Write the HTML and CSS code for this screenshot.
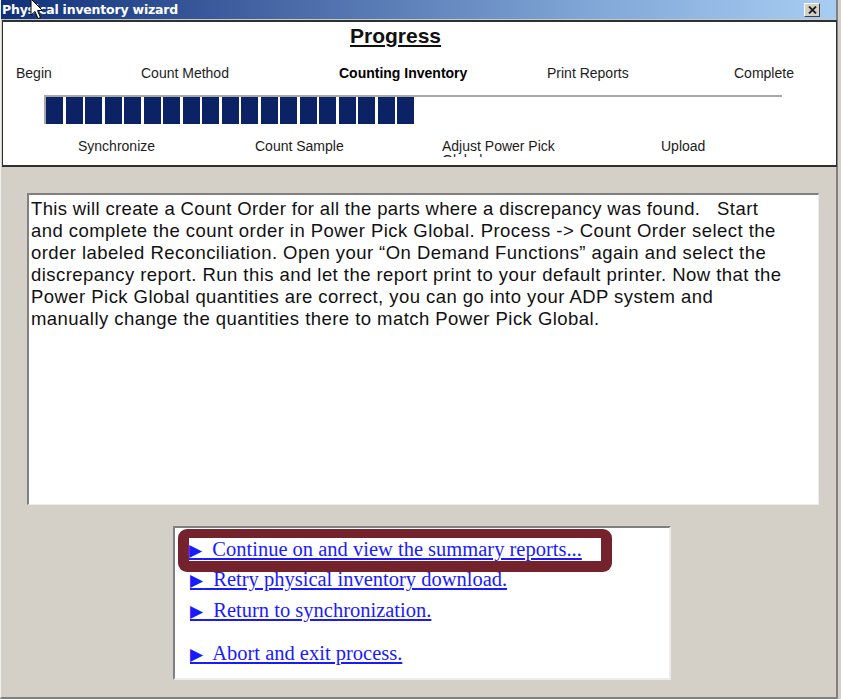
FILE: index.html
```html
<!DOCTYPE html>
<html lang="en">
<head>
    <meta charset="UTF-8">
    <meta name="viewport" content="width=device-width, initial-scale=1.0">
    <title>Physical inventory wizard</title>
    <link rel="stylesheet" href="styles.css">
</head>
<body>
    <div class="window">
        <div class="titlebar">
            <span class="title">Physical inventory wizard</span>
            <button class="close-btn" aria-label="Close">
                <svg width="9" height="8" viewBox="0 0 9 8"><path d="M1 0.5 L8 7.5 M8 0.5 L1 7.5" stroke="#202020" stroke-width="1.8"/></svg>
            </button>
        </div>

        <div class="progress-panel">
            <h2 class="progress-title">Progress</h2>
            <div class="steps steps-top">
                <span>Begin</span>
                <span>Count Method</span>
                <span class="current">Counting Inventory</span>
                <span>Print Reports</span>
                <span>Complete</span>
            </div>
            <div class="progress-bar">
                <div class="blocks" id="blocks"></div>
            </div>
            <div class="steps steps-bottom">
                <span>Synchronize</span>
                <span>Count Sample</span>
                <span class="clip">Adjust Power Pick Global</span>
                <span>Upload</span>
            </div>
        </div>

        <div class="content">
            <div class="info-box">
                <p><span class="tight">This will create a Count Order for all the parts where a discrepancy was found.</span>&nbsp; &nbsp;Start<br>
                and complete the count order in Power Pick Global. Process -&gt; Count Order select the<br>
                order labeled Reconciliation. Open your “On Demand Functions” again and select the<br>
                discrepancy report. Run this and let the report print to your default printer. Now that the<br>
                Power Pick Global quantities are correct, you can go into your ADP system and<br>
                manually change the quantities there to match Power Pick Global.</p>
            </div>

            <div class="links-box">
                <div class="highlight">
                    <a href="#" class="link"><span class="arrow">▶</span>&nbsp; Continue on and view the summary reports...</a>
                </div>
                <a href="#" class="link"><span class="arrow">▶</span>&nbsp; Retry physical inventory download.</a>
                <a href="#" class="link"><span class="arrow">▶</span>&nbsp; Return to synchronization.</a>
                <a href="#" class="link link-gap"><span class="arrow">▶</span>&nbsp; Abort and exit process.</a>
            </div>
        </div>

        <svg class="cursor" width="14" height="22" viewBox="0 0 14 22">
            <path d="M1 1 L1 17 L5 13.5 L8 20.5 L10.5 19.5 L7.5 12.5 L12.5 12.5 Z" fill="#fff" stroke="#000" stroke-width="1"/>
        </svg>
    </div>

    <script>
        // fill the progress bar with the done blocks
        const blocks = document.getElementById('blocks');
        for (let i = 0; i < 19; i++) {
            const b = document.createElement('div');
            b.className = 'block';
            blocks.appendChild(b);
        }
    </script>
</body>
</html>
```

FILE: styles.css
```css
:root {
    --face: #d4d0c8;
    --shadow: #808080;
    --dark: #404040;
    --navy: #0b2264;
    --link: #1a1aff;
    --mark: #74222b;
}

* {
    margin: 0;
    padding: 0;
    box-sizing: border-box;
}

body {
    background: var(--face);
    font-family: 'Liberation Sans', Arial, sans-serif;
    color: #1c1c1c;
    overflow: hidden;
}

.window {
    position: relative;
    width: 838px;
    height: 699px;
    border-left: 1px solid #f0f0f0;
    border-right: 2px solid var(--shadow);
    border-bottom: 2px solid var(--shadow);
    display: flex;
    flex-direction: column;
}

.titlebar {
    height: 20px;
    background: linear-gradient(to right, #10307a 0%, #4a6aa8 35%, #7fa6d6 70%, #a8cdf3 100%);
    display: flex;
    align-items: center;
    justify-content: space-between;
    padding: 0 16px 0 1px;
    border-bottom: 1px solid #c8c8c8;
}

.title {
    color: #fff;
    font-family: 'DejaVu Sans', Tahoma, sans-serif;
    font-weight: bold;
    font-size: 12.5px;
    letter-spacing: -0.2px;
}

.close-btn {
    width: 16px;
    height: 14px;
    background: var(--face);
    border: 1px solid;
    border-color: #fff var(--dark) var(--dark) #fff;
    display: flex;
    align-items: center;
    justify-content: center;
}

.progress-panel {
    background: #fff;
    height: 147px;
    margin: 0 -1px 0 1px;
    border-top: 2px solid #303030;
    border-bottom: 2px solid #303030;
    border-left: 1px solid #303030;
    border-right: 1px solid #303030;
}

.progress-title {
    font-size: 21px;
    font-weight: bold;
    text-decoration: underline;
    text-underline-offset: 2px;
    text-decoration-thickness: 1.5px;
    padding-left: 347px;
    line-height: 24px;
    margin-top: 2px;
    color: #111;
}

.steps {
    display: grid;
    font-size: 14px;
    line-height: 16px;
}

.steps-top {
    grid-template-columns: 125px 198px 208px 187px auto;
    padding-left: 13px;
    margin-top: 17px;
}

.steps-bottom {
    grid-template-columns: 177px 187px 219px auto;
    padding-left: 75px;
    margin-top: 14px;
}

.current {
    font-weight: bold;
    color: #000;
}

.clip {
    width: 125px;
    height: 19px;
    overflow: hidden;
    line-height: 14px;
    padding-top: 1px;
}

.progress-bar {
    margin: 14px 0 0 41px;
    width: 738px;
    height: 29px;
    border-top: 2px solid #a8a8a8;
    border-left: 2px solid #a8a8a8;
}

.blocks {
    display: flex;
    gap: 2.5px;
    height: 27px;
}

.block {
    width: 17px;
    background: var(--navy);
}

.content {
    flex: 1;
    padding: 26px 0 0 26px;
}

.info-box {
    width: 792px;
    height: 312px;
    background: #fff;
    border-top: 2px solid var(--shadow);
    border-left: 2px solid var(--shadow);
    border-bottom: 1px solid #ececec;
    border-right: 1px solid #ececec;
    padding: 3px 0 0 2px;
}

.info-box p {
    font-size: 18.5px;
    letter-spacing: 0.45px;
    line-height: 22px;
    white-space: nowrap;
    color: #111;
}

.info-box .tight {
    letter-spacing: 0.35px;
}

.links-box {
    width: 498px;
    height: 154px;
    margin: 21px 0 0 146px;
    background: #fff;
    border-top: 2px solid var(--shadow);
    border-left: 2px solid var(--shadow);
    border-bottom: 2px solid #ececec;
    border-right: 2px solid #ececec;
    padding: 9px 0 0 15px;
    display: flex;
    flex-direction: column;
    align-items: flex-start;
}

.link {
    display: block;
    height: 31px;
    font-family: 'Liberation Serif', 'Times New Roman', serif;
    font-size: 20.5px;
    line-height: 31px;
    color: var(--link);
    text-decoration: underline;
    text-underline-offset: 2px;
    white-space: nowrap;
}

.arrow {
    font-family: 'DejaVu Sans', sans-serif;
    font-size: 17px;
    line-height: 0;
}

.link-gap {
    margin-top: 12px;
}

.highlight {
    background: var(--mark);
    border-radius: 9px;
    padding: 9px 11px 11px 11px;
    margin: -8px 0 -8px -12px;
}

.highlight .link {
    background: #fff;
    width: 412px;
    height: 23px;
    line-height: 23px;
}

.cursor {
    position: absolute;
    left: 29px;
    top: -2px;
}
```
